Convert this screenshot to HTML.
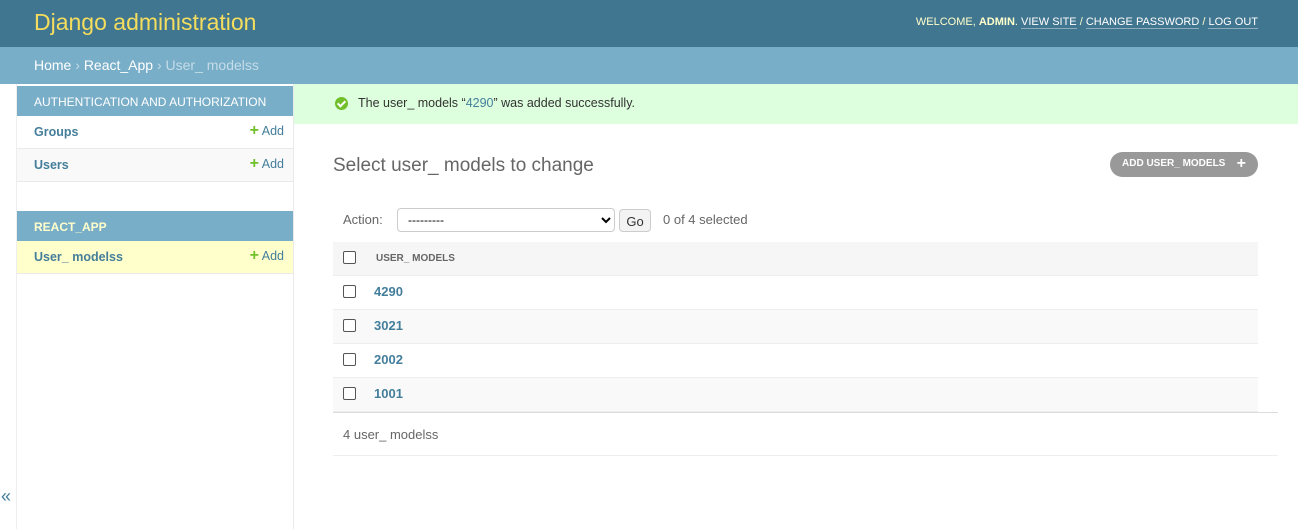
<!DOCTYPE html>
<html><head><meta charset="utf-8"><style>
*{box-sizing:border-box;margin:0;padding:0}
html,body{width:1298px;height:529px;overflow:hidden}
body{font-family:"Liberation Sans",sans-serif;font-size:13px;color:#333;background:#fff;position:relative}
a{color:#447e9b;text-decoration:none}
#header{position:absolute;left:0;top:0;width:1298px;height:47px;background:#417690}
#header h1{position:absolute;left:34px;top:9px;font-size:23px;font-weight:normal;color:#f5dd5d}
#tools{position:absolute;right:40px;top:16px;font-size:11px;color:#ffc;white-space:nowrap}
#tools a{color:#fff;border-bottom:1px solid rgba(255,255,255,.4)}
#bc{position:absolute;left:0;top:47px;width:1298px;height:37px;background:#79aec8;color:#c4dce8;font-size:14px;padding:10px 34px}
#bc a{color:#fff}
#toggle{position:absolute;left:0;top:84px;width:17px;height:445px;border-right:1px solid #eee}
#toggle span{position:absolute;left:1px;top:402px;color:#447e9b;font-size:18px}
#side{position:absolute;left:17px;top:84px;width:277px;height:445px;border-right:1px solid #eaeaea}
.cap{position:absolute;left:0;width:276px;height:30px;background:#79aec8;color:#fff;font-size:12px;padding:9px 17px;white-space:nowrap}
.row{position:absolute;left:0;width:276px;height:33px;border-bottom:1px solid #eaeaea;padding:9px 17px;font-weight:bold;font-size:12.5px}
.row .add{position:absolute;right:9px;top:8px;font-weight:normal}
.add b{color:#70bf2b;font-size:16px;line-height:12px}
#msg{position:absolute;left:294px;top:84px;width:1004px;height:40px;background:#dfd;padding:12px 0 0 64px;font-size:12.5px;color:#333}
#msg i{position:absolute;left:41px;top:13px;width:13px;height:13px;border-radius:50%;background:#70bf2b}
#msg i:after{content:"";position:absolute;left:4px;top:2px;width:3px;height:6px;border:solid #fff;border-width:0 2px 2px 0;transform:rotate(45deg)}
h2{position:absolute;left:333px;top:155px;font-size:19px;font-weight:normal;color:#666}
#addbtn{position:absolute;left:1110px;top:152px;width:148px;height:25px;border-radius:13px;background:#999;color:#fff;font-size:10px;font-weight:bold;padding:6px 0 0 12px;white-space:nowrap}
#addbtn span{position:absolute;right:12px;top:3px;font-size:16px}
#act{position:absolute;left:343px;top:212px;color:#666}
select{position:absolute;left:397px;top:208px;width:218px;height:24px;border:1px solid #ccc;border-radius:4px;background:#fff;font-size:12px;font-family:inherit;padding-left:6px}
#go{position:absolute;left:619px;top:209px;width:32px;height:23px;border:1px solid #ccc;border-radius:4px;background:#f3f3f3;font-size:13px;text-align:center;padding-top:4px}
#cnt{position:absolute;left:663px;top:212px;color:#666}
.tr{position:absolute;left:333px;width:925px;height:34px;border-bottom:1px solid #eee}
.tr .cb{position:absolute;left:10px;top:9px;width:13px;height:13px;border:1px solid #555;border-radius:2px;background:#fff}
.tr .t{position:absolute;left:41px;top:8px;font-weight:bold}
#pag{position:absolute;left:333px;top:412px;width:945px;height:44px;border-top:1px solid #ddd;border-bottom:1px solid #eee;padding:14px 10px;color:#666}
</style></head><body>
<div id="header"><h1>Django administration</h1>
<div id="tools">WELCOME, <b>ADMIN</b>. <a>VIEW SITE</a> / <a>CHANGE PASSWORD</a> / <a>LOG OUT</a></div></div>
<div id="bc"><a>Home</a> › <a>React_App</a> › User_ modelss</div>
<div id="toggle"><span>«</span></div>
<div id="side">
<div class="cap" style="top:2px">AUTHENTICATION AND AUTHORIZATION</div>
<div class="row" style="top:32px"><a>Groups</a><span class="add"><b>+</b> <a style="font-weight:normal">Add</a></span></div>
<div class="row" style="top:65px;background:#f9f9f9"><a>Users</a><span class="add"><b>+</b> <a style="font-weight:normal">Add</a></span></div>
<div class="cap" style="top:127px;font-weight:bold;color:#ffc">REACT_APP</div>
<div class="row" style="top:157px;background:#ffc"><a>User_ modelss</a><span class="add"><b>+</b> <a style="font-weight:normal">Add</a></span></div>
</div>
<div id="msg"><i></i>The user_ models “<a>4290</a>” was added successfully.</div>
<h2>Select user_ models to change</h2>
<div id="addbtn">ADD USER_ MODELS<span>+</span></div>
<div id="act">Action:</div>
<select><option>---------</option></select>
<div id="go">Go</div>
<div id="cnt">0 of 4 selected</div>
<div class="tr" style="top:242px;background:#f6f6f6"><span class="cb"></span><span class="t" style="top:11px;font-size:10px;color:#666;left:43px">USER_ MODELS</span></div>
<div class="tr" style="top:276px"><span class="cb"></span><a class="t">4290</a></div>
<div class="tr" style="top:310px;background:#f9f9f9"><span class="cb"></span><a class="t">3021</a></div>
<div class="tr" style="top:344px"><span class="cb"></span><a class="t">2002</a></div>
<div class="tr" style="top:378px;background:#f9f9f9"><span class="cb"></span><a class="t">1001</a></div>
<div id="pag">4 user_ modelss</div>
</body></html>
